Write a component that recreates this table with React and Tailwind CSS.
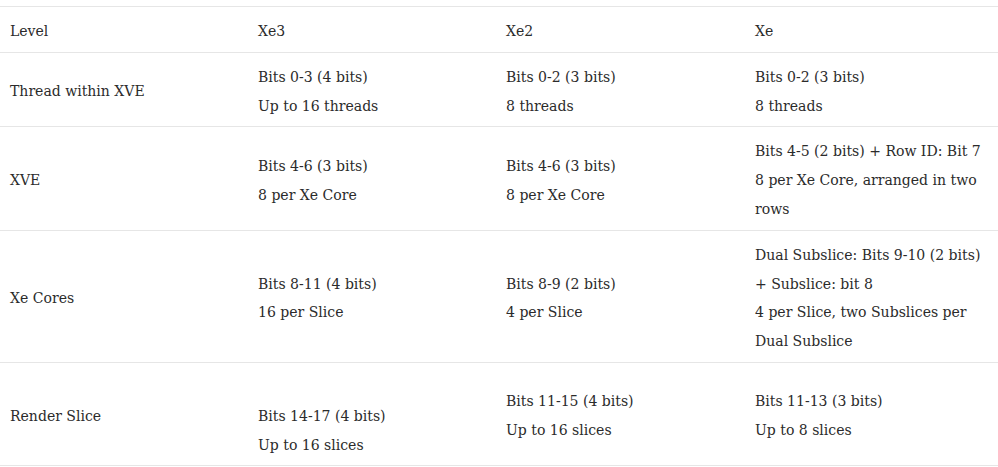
const rows = [
  {
    level: 'Thread within XVE',
    xe3: ['Bits 0-3 (4 bits)', 'Up to 16 threads'],
    xe2: ['Bits 0-2 (3 bits)', '8 threads'],
    xe: ['Bits 0-2 (3 bits)', '8 threads'],
  },
  {
    level: 'XVE',
    xe3: ['Bits 4-6 (3 bits)', '8 per Xe Core'],
    xe2: ['Bits 4-6 (3 bits)', '8 per Xe Core'],
    xe: ['Bits 4-5 (2 bits) + Row ID: Bit 7', '8 per Xe Core, arranged in two', 'rows'],
  },
  {
    level: 'Xe Cores',
    xe3: ['Bits 8-11 (4 bits)', '16 per Slice'],
    xe2: ['Bits 8-9 (2 bits)', '4 per Slice'],
    xe: ['Dual Subslice: Bits 9-10 (2 bits)', '+ Subslice: bit 8', '4 per Slice, two Subslices per', 'Dual Subslice'],
  },
  {
    level: 'Render Slice',
    // the Xe3 cell here starts with an empty line in the source
    xe3: ['\u00a0', 'Bits 14-17 (4 bits)', 'Up to 16 slices'],
    xe2: ['Bits 11-15 (4 bits)', 'Up to 16 slices'],
    xe: ['Bits 11-13 (3 bits)', 'Up to 8 slices'],
  },
]

const Cell = ({ lines }) => (
  <td className="pl-[10px] pr-2 pt-[10px] pb-[6px] align-middle">
    {lines.map((l, i) => (
      <div key={i} className="whitespace-nowrap">{l}</div>
    ))}
  </td>
)

export default function App() {
  return (
    <div className="bg-white pt-[6px] text-[#2b2b2b] text-[15.6px] leading-[28.8px]" style={{ fontFamily: '"DejaVu Serif Condensed", "DejaVu Serif", serif' }}>
      <table className="w-full table-fixed border-collapse">
        <colgroup>
          <col className="w-[248px]" />
          <col className="w-[248px]" />
          <col className="w-[249px]" />
          <col />
        </colgroup>
        <thead>
          <tr className="border-y border-[#e6e6e6] text-left">
            <th className="pl-[10px] pt-[10px] pb-[6px] font-normal">Level</th>
            <th className="pl-[10px] pt-[10px] pb-[6px] font-normal">Xe3</th>
            <th className="pl-[10px] pt-[10px] pb-[6px] font-normal">Xe2</th>
            <th className="pl-[10px] pt-[10px] pb-[6px] font-normal">Xe</th>
          </tr>
        </thead>
        <tbody>
          {rows.map(r => (
            <tr key={r.level} className="border-b border-[#e6e6e6]">
              <td className="pl-[10px] pt-[10px] pb-[6px] align-middle whitespace-nowrap">{r.level}</td>
              <Cell lines={r.xe3} />
              <Cell lines={r.xe2} />
              <Cell lines={r.xe} />
            </tr>
          ))}
        </tbody>
      </table>
    </div>
  )
}
